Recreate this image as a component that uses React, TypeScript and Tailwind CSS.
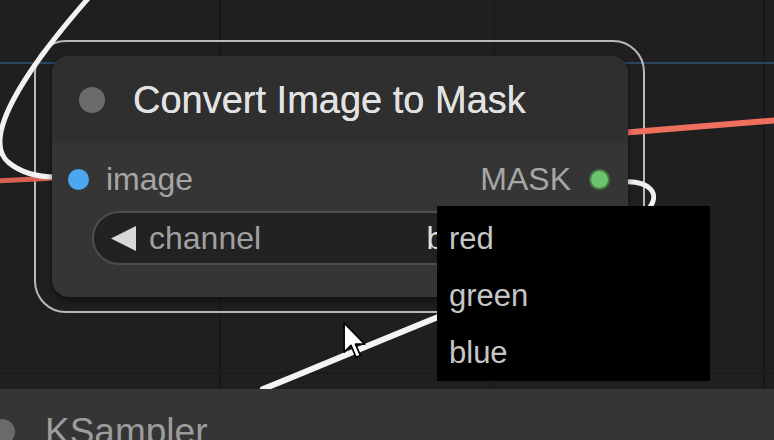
export default function App() {
  return (
    <div className="relative w-[774px] h-[440px] overflow-hidden bg-[#1f1f1f] font-['Liberation_Sans',Arial,sans-serif]">
      {/* canvas grid and a link passing behind the node */}
      <svg className="absolute inset-0" width="774" height="440">
        <line x1="220" y1="0" x2="220" y2="440" stroke="#181818" strokeWidth="2" />
        <line x1="494" y1="0" x2="494" y2="440" stroke="#1a1a1a" strokeWidth="2" />
        <line x1="764" y1="0" x2="764" y2="440" stroke="#181818" strokeWidth="2" />
        <line x1="0" y1="373" x2="774" y2="373" stroke="#1b1b1b" strokeWidth="2" />
        <line x1="0" y1="63" x2="774" y2="63" stroke="#2a4562" strokeWidth="2" />
      </svg>

      {/* selection outline */}
      <div className="absolute left-[34px] top-[40px] w-[611px] h-[273px] rounded-[32px] border-2 border-[#b9b9b9]" />

      {/* links */}
      <svg className="absolute inset-0" width="774" height="440" fill="none" strokeLinecap="round">
        <path d="M -5 181 L 56 178" stroke="#d8604e" strokeWidth="5" />
        <path d="M 92 -6 C 38 55, -22 135, 8 162 C 22 174, 40 177, 56 177" stroke="#f2f2f2" strokeWidth="5" />
        <path d="M 620 133 L 780 120" stroke="#ef6f5f" strokeWidth="6" />
        <path d="M 622 182 C 648 180, 664 193, 646 212" stroke="#f0f0f0" strokeWidth="5" />
        <path d="M 263 389 C 320 366, 390 336, 500 292" stroke="#f4f4f4" strokeWidth="6" />
      </svg>

      {/* Convert Image to Mask node */}
      <div className="absolute left-[52px] top-[56px] w-[576px] h-[241px] rounded-[17px] bg-[#353535] overflow-hidden flex flex-col shadow-[0_4px_6px_rgba(0,0,0,0.45)]">
        <div className="h-[87px] bg-[#2f2f2f] flex items-center pl-[27px] gap-[28px] shrink-0">
          <div className="w-[26px] h-[26px] rounded-full bg-[#6a6a6a]" />
          <span className="text-[38px] leading-none text-[#e2e2e2] [text-shadow:0_0_0.6px_#e2e2e2]">Convert Image to Mask</span>
        </div>
        <div className="mt-[11px] h-[50px] flex items-center pl-[16px] pr-[18px]">
          <div className="w-[21px] h-[21px] rounded-full bg-[#4da6f2]" />
          <span className="ml-[17px] text-[32px] leading-none text-[#a6a6a6]">image</span>
          <div className="flex-1" />
          <span className="text-[32px] leading-none text-[#a6a6a6]">MASK</span>
          <div className="ml-[18px] w-[21px] h-[21px] rounded-full bg-[#6cc46e] border-2 border-[#3f7a41]" />
        </div>
        <div className="mt-[7px] mx-[40px] h-[54px] rounded-full bg-[#222222] border-2 border-[#4e4e4e] flex items-center pl-[16px] pr-[14px]">
          <svg width="27" height="27" viewBox="0 0 27 27">
            <polygon points="1,13.5 26,1 26,26" fill="#d8d8d8" />
          </svg>
          <span className="ml-[12px] text-[32px] leading-none text-[#a0a0a0]">channel</span>
          <div className="flex-1" />
          <span className="text-[32px] leading-none text-[#e0e0e0]">blue</span>
          <svg className="ml-[58px]" width="27" height="27" viewBox="0 0 27 27">
            <polygon points="26,13.5 1,1 1,26" fill="#d8d8d8" />
          </svg>
        </div>
      </div>

      {/* KSampler node title below */}
      <div className="absolute left-[-40px] top-[389px] w-[830px] h-[80px] rounded-t-[14px] bg-[#353535] flex items-start pt-[24px] pl-[29px] gap-[30px]">
        <div className="mt-[6px] w-[26px] h-[26px] rounded-full bg-[#6a6a6a]" />
        <span className="text-[37px] leading-none text-[#9c9c9c]">KSampler</span>
      </div>

      {/* combo dropdown */}
      <div className="absolute left-[437px] top-[206px] w-[273px] h-[175px] bg-black pt-[4px] flex flex-col">
        {["red", "green", "blue"].map((v) => (
          <div key={v} className="h-[57px] flex items-center pl-[12px] text-[31px] leading-none text-[#c6c6c6]">
            {v}
          </div>
        ))}
      </div>

      {/* mouse cursor */}
      <svg className="absolute left-[342px] top-[321px]" width="28" height="40" viewBox="0 0 22 32">
        <path d="M1.5 1.5 L1.5 25 L7 19.5 L11 29 L14.5 27.5 L10.5 18.5 L18 18.5 Z" fill="#ffffff" stroke="#000000" strokeWidth="1.3" strokeLinejoin="round" />
      </svg>
    </div>
  );
}
